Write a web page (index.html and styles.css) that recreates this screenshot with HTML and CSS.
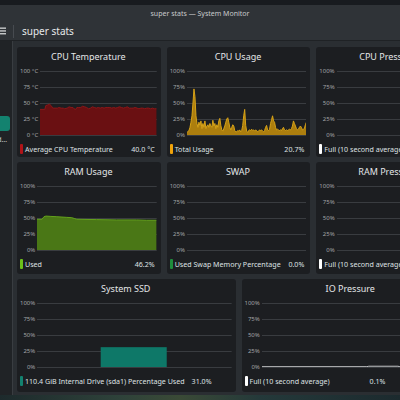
FILE: index.html
```html
<!DOCTYPE html>
<html lang="en">
<head>
    <meta charset="UTF-8">
    <title>super stats — System Monitor</title>
    <link rel="stylesheet" href="styles.css">
</head>
<body>
<div class="desktop">
    <div class="window">
        <div class="titlebar">super stats — System Monitor</div>
        <div class="toolbar">
            <div class="toolbar-left">
                <svg class="menu-icon" width="10" height="8" viewBox="0 0 10 8">
                    <rect x="0" y="0.5" width="10" height="1.3" fill="#d4d6d8"/>
                    <rect x="0" y="3.3" width="10" height="1.3" fill="#d4d6d8"/>
                    <rect x="0" y="6.1" width="10" height="1.3" fill="#d4d6d8"/>
                </svg>
            </div>
            <div class="toolbar-sep"></div>
            <div class="page-title">super stats</div>
        </div>

        <div class="window-body">
            <nav class="sidebar">
                <div class="side-item active"></div>
                <div class="side-label">d…</div>
            </nav>

            <main class="dashboard">
                <!-- row 1 -->
                <section class="card">
                    <div class="card-title">CPU Temperature</div>
                    <div class="chart">
                        <div class="axis"><span>100 °C</span><span>75 °C</span><span>50 °C</span><span>25 °C</span><span>0 °C</span></div>
                        <div class="plot">
                            <div class="gridlines"><i></i><i></i><i></i><i></i><i></i></div>
                            <svg class="data" viewBox="0 0 120 100" preserveAspectRatio="none">
                                <polygon class="temp-fill" points="0,60 5,60 6,54 8,53 10,52 12,55 13,58 18,58 19,57 22,58 24,58 25,59 28,58 30,56 32,57 34,57 35,59 37,60 38,57 40,57 42,57 44,55 46,56 48,57 50,59 52,58 54,56 56,57 58,58 60,57 62,58 64,57 66,58 68,57 70,57 72,57 74,58 76,57 78,58 80,57 82,56 84,57 86,58 88,57 90,56 92,58 94,58 96,58 98,57 100,58 102,59 104,58 106,58 108,59 110,58 112,58 114,59 116,58 118,59 120,59 120,100 0,100"/>
                                <polyline class="temp-line" points="0,60 5,60 6,54 8,53 10,52 12,55 13,58 18,58 19,57 22,58 24,58 25,59 28,58 30,56 32,57 34,57 35,59 37,60 38,57 40,57 42,57 44,55 46,56 48,57 50,59 52,58 54,56 56,57 58,58 60,57 62,58 64,57 66,58 68,57 70,57 72,57 74,58 76,57 78,58 80,57 82,56 84,57 86,58 88,57 90,56 92,58 94,58 96,58 98,57 100,58 102,59 104,58 106,58 108,59 110,58 112,58 114,59 116,58 118,59 120,59"/>
                            </svg>
                        </div>
                    </div>
                    <div class="legend">
                        <div class="legend-item"><span class="swatch red"></span><span>Average CPU Temperature</span><span class="value">40.0 °C</span></div>
                    </div>
                </section>

                <section class="card">
                    <div class="card-title">CPU Usage</div>
                    <div class="chart">
                        <div class="axis"><span>100%</span><span>75%</span><span>50%</span><span>25%</span><span>0%</span></div>
                        <div class="plot">
                            <div class="gridlines"><i></i><i></i><i></i><i></i><i></i></div>
                            <svg class="data" viewBox="0 0 120 100" preserveAspectRatio="none">
                                <polygon class="cpu-fill" points="0,96 2,93 3,88 4,80 5,70 6,50 7,28 8,40 9,70 10,82 11,88 12,80 13,85 14,78 15,90 16,82 17,88 18,78 19,90 20,86 21,84 22,88 23,82 24,86 25,88 26,77 27,86 28,82 29,90 30,84 31,88 32,78 33,74 34,85 35,92 36,94 37,90 38,86 39,80 40,75 41,73 42,80 43,88 44,92 45,88 46,84 47,86 48,93 49,95 50,95 51,93 52,94 53,92 54,95 55,93 56,85 57,70 58,60 59,85 60,94 61,96 62,93 63,92 64,93 65,91 66,93 67,92 68,94 69,92 70,93 71,95 72,94 73,92 74,93 75,92 76,94 77,95 78,93 79,88 80,85 81,92 82,93 83,91 84,82 85,76 86,70 87,78 88,80 89,88 90,92 91,91 92,92 93,93 94,92 95,93 96,90 97,88 98,92 99,93 100,92 101,93 102,92 103,91 104,92 105,90 106,86 107,78 108,82 109,86 110,90 111,92 112,91 113,88 114,86 115,88 116,92 117,91 118,90 119,84 120,80 120,100 0,100"/>
                                <polyline class="cpu-line" points="0,96 2,93 3,88 4,80 5,70 6,50 7,28 8,40 9,70 10,82 11,88 12,80 13,85 14,78 15,90 16,82 17,88 18,78 19,90 20,86 21,84 22,88 23,82 24,86 25,88 26,77 27,86 28,82 29,90 30,84 31,88 32,78 33,74 34,85 35,92 36,94 37,90 38,86 39,80 40,75 41,73 42,80 43,88 44,92 45,88 46,84 47,86 48,93 49,95 50,95 51,93 52,94 53,92 54,95 55,93 56,85 57,70 58,60 59,85 60,94 61,96 62,93 63,92 64,93 65,91 66,93 67,92 68,94 69,92 70,93 71,95 72,94 73,92 74,93 75,92 76,94 77,95 78,93 79,88 80,85 81,92 82,93 83,91 84,82 85,76 86,70 87,78 88,80 89,88 90,92 91,91 92,92 93,93 94,92 95,93 96,90 97,88 98,92 99,93 100,92 101,93 102,92 103,91 104,92 105,90 106,86 107,78 108,82 109,86 110,90 111,92 112,91 113,88 114,86 115,88 116,92 117,91 118,90 119,84 120,80"/>
                            </svg>
                        </div>
                    </div>
                    <div class="legend">
                        <div class="legend-item"><span class="swatch amber"></span><span>Total Usage</span><span class="value">20.7%</span></div>
                    </div>
                </section>

                <section class="card">
                    <div class="card-title">CPU Pressure</div>
                    <div class="chart">
                        <div class="axis"><span>100%</span><span>75%</span><span>50%</span><span>25%</span><span>0%</span></div>
                        <div class="plot">
                            <div class="gridlines"><i></i><i></i><i></i><i></i><i></i></div>
                        </div>
                    </div>
                    <div class="legend">
                        <div class="legend-item"><span class="swatch white"></span><span>Full (10 second average)</span><span class="value">0.0%</span></div>
                    </div>
                </section>

                <!-- row 2 -->
                <section class="card">
                    <div class="card-title">RAM Usage</div>
                    <div class="chart">
                        <div class="axis"><span>100%</span><span>75%</span><span>50%</span><span>25%</span><span>0%</span></div>
                        <div class="plot">
                            <div class="gridlines"><i></i><i></i><i></i><i></i><i></i></div>
                            <svg class="data" viewBox="0 0 120 100" preserveAspectRatio="none">
                                <polygon class="ram-fill" points="0,52 5,52 7,48 9,47 14,47.5 20,48 30,49 35,49.5 38,51 40,52 60,52.5 80,53 100,53 110,53.5 120,53.5 120,100 0,100"/>
                                <polyline class="ram-line" points="0,52 5,52 7,48 9,47 14,47.5 20,48 30,49 35,49.5 38,51 40,52 60,52.5 80,53 100,53 110,53.5 120,53.5"/>
                            </svg>
                        </div>
                    </div>
                    <div class="legend">
                        <div class="legend-item"><span class="swatch lime"></span><span>Used</span><span class="value">46.2%</span></div>
                    </div>
                </section>

                <section class="card">
                    <div class="card-title">SWAP</div>
                    <div class="chart">
                        <div class="axis"><span>100%</span><span>75%</span><span>50%</span><span>25%</span><span>0%</span></div>
                        <div class="plot">
                            <div class="gridlines"><i></i><i></i><i></i><i></i><i></i></div>
                        </div>
                    </div>
                    <div class="legend">
                        <div class="legend-item"><span class="swatch green"></span><span>Used Swap Memory Percentage</span><span class="value">0.0%</span></div>
                    </div>
                </section>

                <section class="card">
                    <div class="card-title">RAM Pressure</div>
                    <div class="chart">
                        <div class="axis"><span>100%</span><span>75%</span><span>50%</span><span>25%</span><span>0%</span></div>
                        <div class="plot">
                            <div class="gridlines"><i></i><i></i><i></i><i></i><i></i></div>
                        </div>
                    </div>
                    <div class="legend">
                        <div class="legend-item"><span class="swatch white"></span><span>Full (10 second average)</span><span class="value">0.0%</span></div>
                    </div>
                </section>

                <!-- row 3 -->
                <section class="card wide">
                    <div class="card-title">System SSD</div>
                    <div class="chart">
                        <div class="axis"><span>100%</span><span>75%</span><span>50%</span><span>25%</span><span>0%</span></div>
                        <div class="plot">
                            <div class="gridlines"><i></i><i></i><i></i><i></i><i></i></div>
                            <svg class="data" viewBox="0 0 100 100" preserveAspectRatio="none">
                                <rect class="ssd-bar" x="32.8" y="69" width="34" height="31"/>
                            </svg>
                        </div>
                    </div>
                    <div class="legend">
                        <div class="legend-item"><span class="swatch teal"></span><span>110.4 GiB Internal Drive (sda1) Percentage Used</span><span class="value">31.0%</span></div>
                    </div>
                </section>

                <section class="card wide">
                    <div class="card-title">IO Pressure</div>
                    <div class="chart">
                        <div class="axis"><span>100%</span><span>75%</span><span>50%</span><span>25%</span><span>0%</span></div>
                        <div class="plot">
                            <div class="gridlines"><i></i><i></i><i></i><i></i><i></i></div>
                            <svg class="data" viewBox="0 0 100 100" preserveAspectRatio="none">
                                <polyline class="io-line" points="0,99.5 54,99.5 55,98.8 70,98.8 71,99.5 100,99.5"/>
                            </svg>
                        </div>
                    </div>
                    <div class="legend">
                        <div class="legend-item"><span class="swatch white"></span><span>Full (10 second average)</span><span class="value">0.1%</span></div>
                    </div>
                </section>
            </main>
        </div>
    </div>
</div>
</body>
</html>
```

FILE: styles.css
```css
body {
    margin: 0;
    font-family: "Noto Sans", "DejaVu Sans", sans-serif;
    background-color: #181b1f;
}

.desktop {
    width: 400px;
    height: 400px;
    overflow: hidden;
    background:
        linear-gradient(90deg, #1d2a2c 0%, #2e423a 30%, #3a4a36 45%, #24393a 65%, #1c2a2e 100%) bottom / 100% 6px no-repeat,
        #181b1f;
}

.window {
    margin-left: -64px;
    margin-top: 5px;
    width: 528px;
    height: 390px;
    background-color: #2a2e32;
    display: flex;
    flex-direction: column;
}

.titlebar {
    height: 17px;
    line-height: 17px;
    text-align: center;
    font-size: 7px;
    color: #c8cacc;
    background-color: #2f3337;
}

.toolbar {
    height: 18px;
    display: flex;
    align-items: center;
    background-color: #2f3337;
    border-bottom: 1px solid #1f2225;
}

.toolbar-left {
    width: 77px;
    display: flex;
    justify-content: flex-end;
}

.menu-icon {
    display: block;
    margin-right: 7px;
}

.toolbar-sep {
    width: 1px;
    height: 13px;
    background-color: #474b50;
}

.page-title {
    margin-left: 8px;
    font-size: 10px;
    color: #e6e8ea;
}

.window-body {
    flex: 1;
    display: flex;
    min-height: 0;
}

/* Sidebar */
.sidebar {
    width: 76px;
    background-color: #202326;
    border-right: 1px solid #393d41;
    display: flex;
    flex-direction: column;
    align-items: flex-end;
}

.side-item {
    width: 70px;
    height: 15px;
    margin-top: 75px;
    margin-right: 2px;
    border-radius: 3px;
    background-color: #13826f;
}

.side-label {
    margin-top: 4px;
    margin-right: 5px;
    font-size: 7px;
    color: #c8cacc;
}

/* Dashboard */
.dashboard {
    flex: 1;
    padding: 6px 4px 0 4px;
    display: grid;
    grid-template-columns: repeat(6, 1fr);
    grid-template-rows: 110px 112px 113px;
    column-gap: 6px;
    row-gap: 5px;
}

.card {
    grid-column: span 2;
    background-color: #1c1e21;
    border-radius: 3px;
    padding: 0 4px 0 3px;
    display: flex;
    flex-direction: column;
    min-width: 0;
    overflow: hidden;
}

.card.wide {
    grid-column: span 3;
}

.card-title {
    height: 20px;
    line-height: 20px;
    text-align: center;
    font-size: 9px;
    color: #e3e5e7;
    white-space: nowrap;
}

.chart {
    height: 72px;
    display: grid;
    grid-template-columns: auto 1fr;
    column-gap: 2px;
}

.axis {
    display: flex;
    flex-direction: column;
    justify-content: space-between;
    text-align: right;
    font-size: 6px;
    line-height: 8px;
    color: #a2a4a7;
    white-space: nowrap;
}

.plot {
    display: grid;
}

.gridlines,
.data {
    grid-area: 1 / 1;
}

.gridlines {
    display: flex;
    flex-direction: column;
    justify-content: space-between;
}

.gridlines i {
    display: block;
    height: 8px;
    background: linear-gradient(#393c40, #393c40) center / 100% 1px no-repeat;
}

.data {
    display: block;
    width: 100%;
    height: 64px;
    margin-top: 4px;
}

.temp-fill { fill: #6a1012; }
.temp-line { fill: none; stroke: #8a1819; stroke-width: 1; vector-effect: non-scaling-stroke; }
.cpu-fill { fill: #ac7e0e; }
.cpu-line { fill: none; stroke: #d6a218; stroke-width: 1; vector-effect: non-scaling-stroke; }
.ram-fill { fill: #4a7716; }
.ram-line { fill: none; stroke: #64a21c; stroke-width: 1; vector-effect: non-scaling-stroke; }
.ssd-bar { fill: #0e7868; }
.io-line { fill: none; stroke: #c4c6c8; stroke-width: 1; vector-effect: non-scaling-stroke; }

/* Legend */
.legend {
    margin-top: 3px;
    height: 14px;
    display: flex;
    align-items: center;
    font-size: 7.1px;
    color: #dfe1e3;
    white-space: nowrap;
}

.legend-item {
    flex: 1;
    display: flex;
    align-items: center;
    padding-right: 2px;
}

.wide .legend-item {
    flex: 0 0 auto;
    min-width: 141px;
}

.swatch {
    width: 3px;
    height: 10px;
    margin-right: 2px;
    border-radius: 1px;
}

.swatch.red { background-color: #b01418; }
.swatch.amber { background-color: #f0a30a; }
.swatch.white { background-color: #ffffff; }
.swatch.lime { background-color: #6cc01a; }
.swatch.green { background-color: #1f8c3c; }
.swatch.teal { background-color: #13826f; }

.value {
    margin-left: auto;
    padding-left: 7px;
}
```
